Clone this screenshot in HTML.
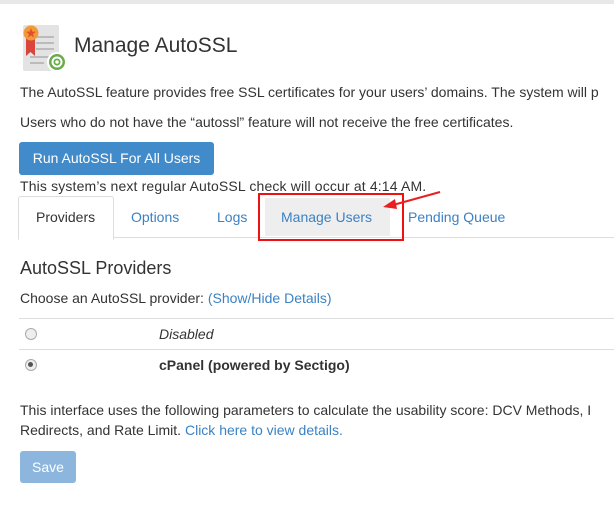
<!DOCTYPE html>
<html><head><style>
body{margin:0;width:614px;height:532px;overflow:hidden;background:#fff;font-family:"Liberation Sans",sans-serif;color:#333;font-size:14px;position:relative}
.a{position:absolute;white-space:nowrap}
.blue{color:#3b82c4}
</style></head><body>
<div class="a" style="left:0;top:0;width:614px;height:4px;background:#e8e8e8"></div>
<svg class="a" style="left:22px;top:24px" width="46" height="50" viewBox="0 0 46 50">
<rect x="1" y="1" width="36" height="46" rx="2" fill="#e3e3e3"/>
<rect x="14" y="12" width="18" height="2" fill="#bbb"/><rect x="14" y="18" width="18" height="2" fill="#bbb"/><rect x="14" y="24" width="18" height="2" fill="#bbb"/><rect x="8" y="32" width="20" height="2" fill="#bbb"/><rect x="8" y="38" width="14" height="2" fill="#bbb"/>
<path d="M4 14 L4 32 L8.5 28 L13 32 L13 14Z" fill="#d9453a"/>
<circle cx="9" cy="9" r="7.5" fill="#f29a38"/><path d="M9 4 L10.3 7.6 L14 7.7 L11 10 L12 13.5 L9 11.4 L6 13.5 L7 10 L4 7.7 L7.7 7.6Z" fill="#e0502e"/>
<circle cx="35" cy="38" r="10" fill="#fff"/><circle cx="35" cy="38" r="8" fill="#6aab4a"/><circle cx="35" cy="38" r="4.5" fill="none" stroke="#fff" stroke-width="2"/><circle cx="35" cy="38" r="1.8" fill="#fff"/>
</svg>
<div class="a" style="left:74px;top:34px;font-size:21px;color:#333">Manage AutoSSL</div>
<div class="a" style="left:20px;top:84px">The AutoSSL feature provides free SSL certificates for your users’ domains. The system will p</div>
<div class="a" style="left:20px;top:114px">Users who do not have the “autossl” feature will not receive the free certificates.</div>
<div class="a" style="left:19px;top:142px;width:195px;height:33px;background:#428bca;border-radius:3px;color:#fff;line-height:33px;text-align:center">Run AutoSSL For All Users</div>
<div class="a" style="left:20px;top:178px;letter-spacing:0.15px">This system’s next regular AutoSSL check will occur at 4:14 AM.</div>
<div class="a" style="left:19px;top:237px;width:600px;height:1px;background:#ddd"></div>
<div class="a" style="left:18px;top:196px;width:94px;height:42px;border:1px solid #ddd;border-bottom-color:#fff;border-radius:3px 3px 0 0;background:#fff"></div>
<div class="a" style="left:36px;top:209px">Providers</div>
<div class="a blue" style="left:131px;top:209px">Options</div>
<div class="a blue" style="left:217px;top:209px">Logs</div>
<div class="a" style="left:265px;top:198px;width:125px;height:38px;background:#eee"></div>
<div class="a blue" style="left:281px;top:209px">Manage Users</div>
<div class="a blue" style="left:408px;top:209px">Pending Queue</div>
<div class="a" style="left:258px;top:193px;width:142px;height:44px;border:2px solid #ee1111"></div>
<svg class="a" style="left:375px;top:185px" width="70" height="30"><line x1="65" y1="7" x2="18" y2="20" stroke="#e82020" stroke-width="2"/><path d="M8 22 L20 14 L22 24Z" fill="#e82020"/></svg>
<div class="a" style="left:20px;top:258px;font-size:18px">AutoSSL Providers</div>
<div class="a" style="left:20px;top:290px">Choose an AutoSSL provider: <span class="blue">(Show/Hide Details)</span></div>
<div class="a" style="left:19px;top:318px;width:600px;height:1px;background:#ddd"></div>
<div class="a" style="left:25px;top:328px;width:10px;height:10px;border-radius:50%;border:1px solid #aaa;background:#eee"></div>
<div class="a" style="left:159px;top:326px;font-style:italic">Disabled</div>
<div class="a" style="left:19px;top:349px;width:600px;height:1px;background:#ddd"></div>
<div class="a" style="left:25px;top:359px;width:10px;height:10px;border-radius:50%;border:1px solid #aaa;background:#eee"></div>
<div class="a" style="left:28px;top:362px;width:5px;height:5px;border-radius:50%;background:#555"></div>
<div class="a" style="left:159px;top:357px;font-weight:bold">cPanel (powered by Sectigo)</div>
<div class="a" style="left:20px;top:402px">This interface uses the following parameters to calculate the usability score: DCV Methods, I</div>
<div class="a" style="left:20px;top:422px">Redirects, and Rate Limit. <span class="blue">Click here to view details.</span></div>
<div class="a" style="left:20px;top:451px;width:56px;height:32px;background:#8cb6de;border-radius:3px;color:#fff;line-height:32px;text-align:center">Save</div>
</body></html>
